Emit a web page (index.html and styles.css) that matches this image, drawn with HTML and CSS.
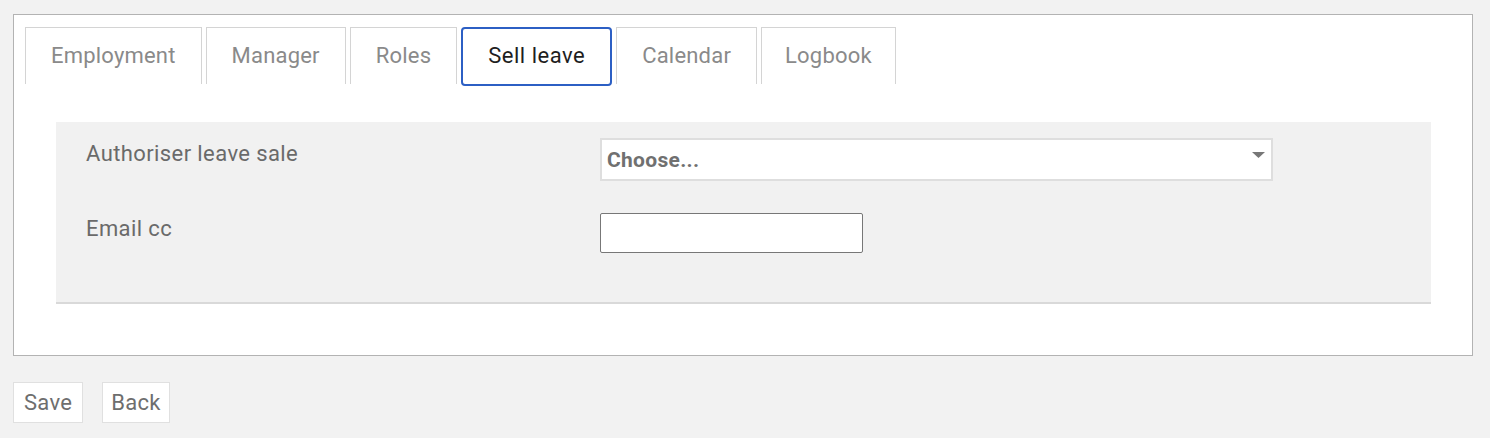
FILE: index.html
```html
<!DOCTYPE html>
<html>
<head>
<meta charset="utf-8">
<link rel="stylesheet" href="styles.css">
</head>
<body>
<div class="page">
  <div class="panel">
    <div class="tabs">
      <div class="tab">Employment</div>
      <div class="tab">Manager</div>
      <div class="tab">Roles</div>
      <div class="tab active">Sell leave</div>
      <div class="tab">Calendar</div>
      <div class="tab tab-last">Logbook</div>
    </div>
    <div class="form">
      <div class="row row-first">
        <div class="label">Authoriser leave sale</div>
        <div class="select">
          <span class="select-text">Choose...</span>
          <svg class="caret" width="13" height="6" viewBox="0 0 13 6"><path d="M0 0H13L6.5 6Z" fill="#777"/></svg>
        </div>
      </div>
      <div class="row row-second">
        <div class="label">Email cc</div>
        <div class="input"></div>
      </div>
    </div>
  </div>
  <div class="actions">
    <button class="btn">Save</button>
    <button class="btn btn-back">Back</button>
  </div>
</div>
</body>
</html>
```
FILE: styles.css
```css
html, body {
  margin: 0;
  padding: 0;
  background: #f2f2f2;
  font-family: Roboto, "Liberation Sans", sans-serif;
}
.page {
  padding: 14px 17px 0 13px;
}
.panel {
  background: #fff;
  border: 1px solid #b3b3b3;
  padding: 12px 41px 53px 11px;
  height: 342px;
  box-sizing: border-box;
}
.tabs {
  display: flex;
  gap: 4px;
  align-items: flex-start;
  height: 57px;
}
.tab {
  height: 57px;
  box-sizing: border-box;
  border: 1px solid #d4d4d4;
  border-bottom: none;
  padding: 0 25px 2px;
  display: flex;
  align-items: center;
  font-size: 22px;
  letter-spacing: 0.2px;
  color: #8a8a8a;
}
.tab.active {
  height: 59px;
  border: 2px solid #2c5fc4;
  border-radius: 4px;
  padding: 0 25px 2px;
  color: #1e1e1e;
  letter-spacing: 0.5px;
}
.tab.tab-last {
  padding: 0 23px 2px;
}
.form {
  margin-top: 38px;
  margin-left: 31px;
  background: #f1f1f1;
  border-bottom: 2px solid #d9d9d9;
  height: 182px;
  box-sizing: border-box;
  padding: 16px 0 0 30px;
}
.row {
  display: grid;
  grid-template-columns: 514px 673px;
}
.row-second {
  margin-top: 32px;
}
.label {
  font-size: 22px;
  letter-spacing: 0.4px;
  color: #6a6a6a;
  padding-top: 3px;
}
.select {
  height: 43px;
  box-sizing: border-box;
  background: #fff;
  border: 2px solid #dedede;
  display: flex;
  align-items: center;
  justify-content: space-between;
  padding: 0 6px 0 5px;
}
.select-text {
  font-size: 21px;
  font-weight: bold;
  letter-spacing: 0.3px;
  color: #707070;
}
.caret {
  margin-top: -9px;
}
.input {
  width: 263px;
  height: 40px;
  box-sizing: border-box;
  background: #fff;
  border: 1px solid #777;
  border-radius: 2px;
}
.actions {
  display: flex;
  gap: 19px;
  margin-top: 26px;
}
.btn {
  height: 41px;
  background: #fff;
  border: 1px solid #e0e0e0;
  padding: 0 10px;
  font-family: Roboto, "Liberation Sans", sans-serif;
  font-size: 22px;
  letter-spacing: 0.3px;
  color: #6e6e6e;
}
.btn.btn-back {
  padding: 0 8px;
}
```
